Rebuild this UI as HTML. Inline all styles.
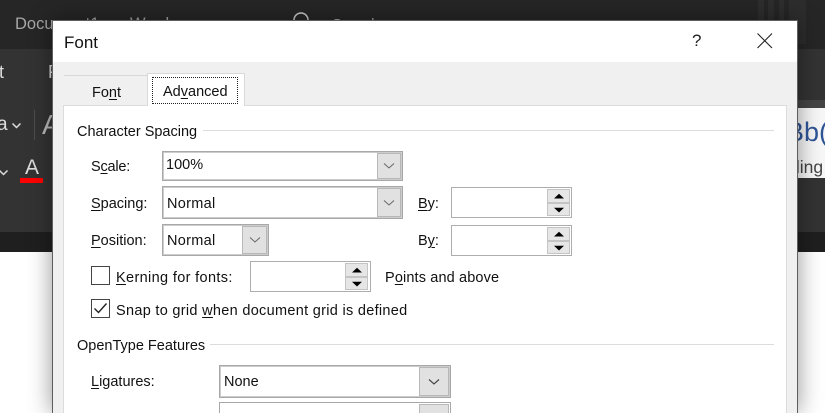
<!DOCTYPE html>
<html><head><meta charset="utf-8"><style>
html,body{margin:0;padding:0;width:825px;height:413px;overflow:hidden;background:#fff}
body{position:relative;font-family:"Liberation Sans",sans-serif;font-size:14.5px;color:#111}
#clip{position:absolute;left:0;top:0;width:825px;height:413px;overflow:hidden}
.a{position:absolute}
.t{position:absolute;white-space:nowrap;line-height:18px}
u{text-decoration-thickness:1px;text-underline-offset:2px}
.box{position:absolute;box-sizing:border-box;background:#fff;border:1px solid #adadad}
.cb{position:absolute;box-sizing:border-box;background:#fff;border:2px solid #ccc;outline:1px solid #a8a8a8;outline-offset:-1px}
.btn{position:absolute;box-sizing:border-box;background:#e1e1e1;border:1px solid #b8b8b8}
.btn svg{position:absolute;left:50%;top:50%;margin:-4px 0 0 -6px}
.sp{position:absolute;box-sizing:border-box;background:#e6e6e6;border:1px solid #c4c4c4}
</style></head><body><div id="clip">
<div class="a" style="left:0;top:0;width:825px;height:49px;background:#262626"></div>
<div class="a" style="left:758px;top:0;width:6px;height:44px;background:#2e2e2e"></div>
<div class="a" style="left:768px;top:0;width:6px;height:44px;background:#2e2e2e"></div>
<div class="a" style="left:779px;top:0;width:5px;height:44px;background:#2e2e2e"></div>
<div class="a" style="left:789px;top:0;width:17px;height:44px;background:#2d2d2d"></div>
<div class="a" style="left:0;top:49px;width:825px;height:183px;background:#333"></div>
<div class="a" style="left:0;top:232px;width:825px;height:20px;background:#1f1f1f"></div>
<div class="a" style="left:790px;top:100px;width:35px;height:8px;background:#444"></div>
<div class="a" style="left:790px;top:108px;width:35px;height:70px;background:#f7f7f7"></div>

<div class="t" style="left:15px;top:15px;color:#a6a6a6;font-size:16.5px">Document1</div>
<div class="t" style="left:130px;top:15px;color:#a6a6a6;font-size:16.5px">Word</div>
<svg class="a" style="left:292px;top:11px" width="22" height="22"><circle cx="9" cy="9" r="7" fill="none" stroke="#ccc" stroke-width="1.5"/></svg>
<div class="t" style="left:332px;top:16px;color:#a6a6a6;font-size:15px">Search</div>
<div class="t" style="left:-1px;top:63px;color:#ddd;font-size:18px">t</div>
<div class="t" style="left:48px;top:63px;color:#ddd;font-size:18px">F</div>
<div class="t" style="left:-3px;top:116px;color:#ddd;font-size:19px">a</div>
<svg class="a" style="left:11px;top:122px" width="12" height="8"><path d="M1.5 1.5L5.5 5.5L9.5 1.5" fill="none" stroke="#ddd" stroke-width="1.5"/></svg>
<div class="a" style="left:34px;top:110px;width:1px;height:30px;background:#4d4d4d"></div>
<div class="t" style="left:42px;top:111px;color:#bbb;font-size:28px;line-height:28px">A</div>
<svg class="a" style="left:-2px;top:169px" width="12" height="8"><path d="M1.5 1.5L5.5 5.5L9.5 1.5" fill="none" stroke="#ddd" stroke-width="1.5"/></svg>
<div class="t" style="left:25px;top:158px;color:#ddd;font-size:21px;line-height:20px">A</div>
<div class="a" style="left:20px;top:178px;width:23px;height:5px;background:#f00"></div>
<div class="t" style="left:786px;top:118px;color:#2f5597;font-size:27px;line-height:28px">Bb(</div>
<div class="t" style="left:790px;top:158px;color:#444;font-size:17.5px">ding</div>

<!-- dialog -->
<div class="a" style="left:52px;top:20px;width:746px;height:393px;box-sizing:border-box;background:#f0f0f0;border:1px solid #5e5e5e;border-bottom:0;box-shadow:0 0 22px rgba(0,0,0,.42)"></div>
<div class="a" style="left:53px;top:21px;width:744px;height:41px;background:#fff"></div>
<div class="t" style="left:64px;top:34px;font-size:17px;color:#111">Font</div>
<div class="t" style="left:692px;top:32px;font-size:17px;color:#222">?</div>
<svg class="a" style="left:756px;top:32px" width="18" height="18"><path d="M1.5 1.5L16 16M16 1.5L1.5 16" fill="none" stroke="#222" stroke-width="1.1"/></svg>

<!-- tabs -->
<div class="a" style="left:64px;top:75px;width:84px;height:1px;background:#d9d9d9"></div>
<div class="t" style="left:92px;top:84px">Fo<u>n</u>t</div>
<div class="a" style="left:63px;top:105px;width:724px;height:308px;box-sizing:border-box;background:#fff;border:1px solid #dcdcdc;border-bottom:0"></div>
<div class="a" style="left:147px;top:73px;width:98px;height:33px;box-sizing:border-box;background:#fff;border:1px solid #d9d9d9;border-bottom:0"></div>
<div class="a" style="left:152px;top:77px;width:86px;height:27px;box-sizing:border-box;border:1px dotted #222"></div>
<div class="t" style="left:163px;top:83px">Ad<u>v</u>anced</div>

<!-- Character spacing -->
<div class="t" style="left:77px;top:123px">Character Spacing</div>
<div class="a" style="left:203px;top:130px;width:571px;height:1px;background:#dcdcdc"></div>

<div class="t" style="left:91px;top:158px;letter-spacing:-.2px">S<u>c</u>ale:</div>
<div class="cb" style="left:162px;top:151px;width:241px;height:30px"></div>
<div class="t" style="left:166px;top:156px">100%</div>
<div class="btn" style="left:377px;top:153px;width:24px;height:26px"><svg width="12" height="8"><path d="M1 1.5L6 6L11 1.5" fill="none" stroke="#666" stroke-width="1"/></svg></div>

<div class="t" style="left:91px;top:195px"><u>S</u>pacing:</div>
<div class="cb" style="left:162px;top:186px;width:241px;height:33px"></div>
<div class="t" style="left:167px;top:195px;letter-spacing:.3px">Normal</div>
<div class="btn" style="left:377px;top:188px;width:24px;height:29px"><svg width="12" height="8"><path d="M1 1.5L6 6L11 1.5" fill="none" stroke="#666" stroke-width="1"/></svg></div>

<div class="t" style="left:91px;top:232px"><u>P</u>osition:</div>
<div class="cb" style="left:162px;top:224px;width:107px;height:32px"></div>
<div class="t" style="left:167px;top:232px;letter-spacing:.3px">Normal</div>
<div class="btn" style="left:242px;top:226px;width:25px;height:28px"><svg width="12" height="8"><path d="M1 1.5L6 6L11 1.5" fill="none" stroke="#666" stroke-width="1"/></svg></div>

<div class="t" style="left:418px;top:195px"><u>B</u>y:</div>
<div class="box" style="left:451px;top:187px;width:121px;height:31px"></div>
<div class="sp" style="left:547px;top:189px;width:23px;height:14px"><svg class="a" style="left:5px;top:3px" width="12" height="7"><path d="M1 5.5L6 .8L11 5.5Z" fill="#000"/></svg></div>
<div class="sp" style="left:547px;top:203px;width:23px;height:13px"><svg class="a" style="left:5px;top:3px" width="12" height="7"><path d="M1 .8L6 5.5L11 .8Z" fill="#000"/></svg></div>

<div class="t" style="left:418px;top:232px">B<u>y</u>:</div>
<div class="box" style="left:451px;top:225px;width:121px;height:31px"></div>
<div class="sp" style="left:547px;top:227px;width:23px;height:14px"><svg class="a" style="left:5px;top:3px" width="12" height="7"><path d="M1 5.5L6 .8L11 5.5Z" fill="#000"/></svg></div>
<div class="sp" style="left:547px;top:241px;width:23px;height:13px"><svg class="a" style="left:5px;top:3px" width="12" height="7"><path d="M1 .8L6 5.5L11 .8Z" fill="#000"/></svg></div>

<div class="a" style="left:91px;top:266px;width:19px;height:19px;box-sizing:border-box;background:#fff;border:1px solid #444"></div>
<div class="t" style="left:116px;top:269px;letter-spacing:.35px"><u>K</u>erning for fonts:</div>
<div class="box" style="left:250px;top:261px;width:121px;height:31px"></div>
<div class="sp" style="left:345px;top:263px;width:23px;height:14px"><svg class="a" style="left:5px;top:3px" width="12" height="7"><path d="M1 5.5L6 .8L11 5.5Z" fill="#000"/></svg></div>
<div class="sp" style="left:345px;top:277px;width:23px;height:13px"><svg class="a" style="left:5px;top:3px" width="12" height="7"><path d="M1 .8L6 5.5L11 .8Z" fill="#000"/></svg></div>
<div class="t" style="left:385px;top:269px;letter-spacing:.13px">P<u>o</u>ints and above</div>

<div class="a" style="left:91px;top:299px;width:19px;height:19px;box-sizing:border-box;background:#fff;border:1px solid #444"></div>
<svg class="a" style="left:91px;top:299px" width="19" height="19"><path d="M3.5 9.5L7.5 13.5L15.5 4.5" fill="none" stroke="#222" stroke-width="1.4"/></svg>
<div class="t" style="left:116px;top:302px;letter-spacing:.3px">Snap to grid <u>w</u>hen document grid is defined</div>

<!-- OpenType -->
<div class="t" style="left:77px;top:337px">OpenType Features</div>
<div class="a" style="left:210px;top:344px;width:564px;height:1px;background:#dcdcdc"></div>
<div class="t" style="left:91px;top:373px"><u>L</u>igatures:</div>
<div class="cb" style="left:219px;top:365px;width:232px;height:33px"></div>
<div class="t" style="left:224px;top:373px">None</div>
<div class="btn" style="left:419px;top:367px;width:30px;height:29px"><svg width="12" height="8"><path d="M1 1.5L6 6L11 1.5" fill="none" stroke="#444" stroke-width="1.2"/></svg></div>
<div class="cb" style="left:219px;top:402px;width:232px;height:11px;border-bottom:0;outline:0;border-top:1px solid #a8a8a8;border-left:1px solid #a8a8a8;border-right:1px solid #a8a8a8"></div>
<div class="btn" style="left:419px;top:404px;width:30px;height:9px;border-bottom:0"></div>
</div></body></html>
